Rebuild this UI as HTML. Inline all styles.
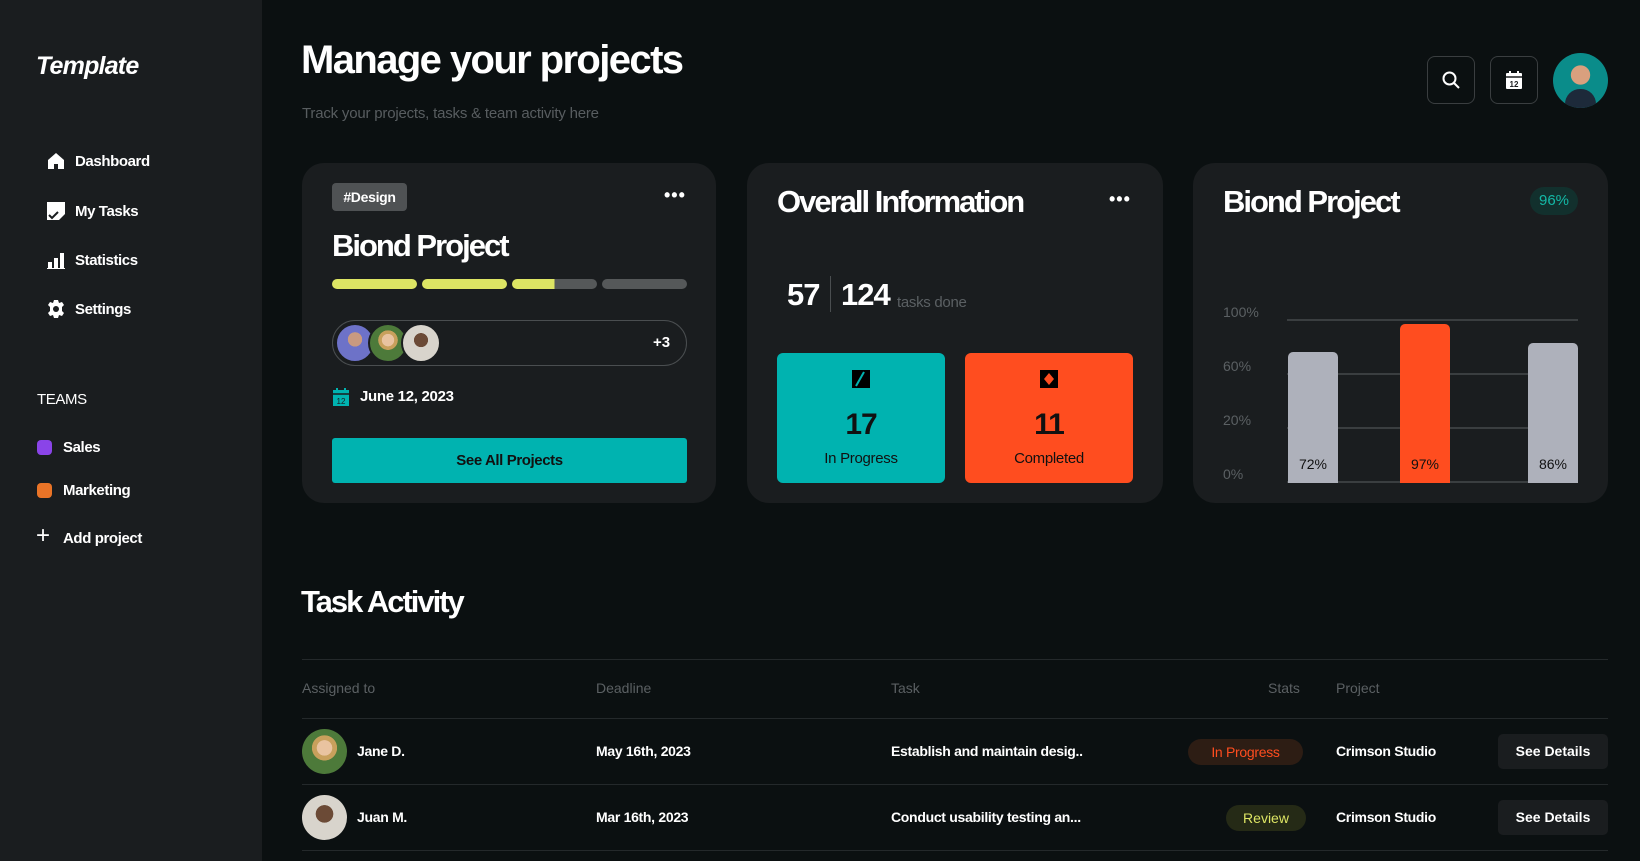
<!DOCTYPE html>
<html><head><meta charset="utf-8"><style>
*{margin:0;padding:0;box-sizing:border-box}
body{width:1640px;height:861px;background:#0b1011;font-family:"Liberation Sans",sans-serif;color:#fff;position:relative;overflow:hidden}
.a{position:absolute}
.side{left:0;top:0;width:262px;height:861px;background:#1a1d1f}
.nav{font-size:15px;font-weight:bold;letter-spacing:-0.4px}
.card{background:#1a1d1f;border-radius:22px;top:163px;height:340px}
.dots{font-size:18px;font-weight:bold;letter-spacing:1px}
.bar{height:10px;border-radius:5px;top:279px;background:#555859}
.av{border-radius:50%;border:2px solid #1a1d1f}
.lbl{color:#5b6063;font-size:14px}
.gl{height:2px;background:#3a3e40;left:1287px;width:291px}
.b{width:50px;border-radius:5px 5px 0 0;font-size:14px;color:#111;text-align:center}
.hl{left:302px;width:1306px;height:1px;background:#24292b}
.th{top:680px;color:#5b6063;font-size:14px}
.td{font-size:14px;font-weight:bold;letter-spacing:-0.3px}
.btn{background:#1a1d1f;border-radius:5px;width:110px;height:35px;left:1498px;font-size:14px;font-weight:bold;text-align:center;line-height:35px}
.h{font-size:31px;font-weight:bold;letter-spacing:-2px}
</style></head><body>
<div class="a side"></div>
<div class="a" style="left:36px;top:52px;font-size:25px;font-weight:bold;font-style:italic;letter-spacing:-0.8px">Template</div>
<svg class="a" style="left:47px;top:152px" width="18" height="18" viewBox="0 0 18 18"><path d="M9 1L1 8v9h6v-5h4v5h6V8z" fill="#fff"/></svg>
<div class="a nav" style="left:75px;top:153px">Dashboard</div>
<svg class="a" style="left:47px;top:202px" width="18" height="18" viewBox="0 0 18 18"><path d="M0 0h18v12l-6 6H0z" fill="#fff"/><path d="M2 13l3 3 6-6" stroke="#1a1d1f" stroke-width="2" fill="none"/></svg>
<div class="a nav" style="left:75px;top:203px">My Tasks</div>
<svg class="a" style="left:47px;top:251px" width="18" height="18" viewBox="0 0 18 18"><path d="M0 17h18v1H0zM1 11h4v6H1zM7 7h4v10H7zM13 2h4v15h-4z" fill="#fff"/></svg>
<div class="a nav" style="left:75px;top:252px">Statistics</div>
<svg class="a" style="left:47px;top:300px" width="18" height="18" viewBox="0 0 18 18"><path d="M7 0h4l1 3 3-1 2 3-2 2v4l2 2-2 3-3-1-1 3H7l-1-3-3 1-2-3 2-2V7L1 5l2-3 3 1z" fill="#fff"/><circle cx="9" cy="9" r="3" fill="#1a1d1f"/></svg>
<div class="a nav" style="left:75px;top:301px">Settings</div>
<div class="a nav" style="left:37px;top:391px;font-weight:normal">TEAMS</div>
<div class="a" style="left:37px;top:440px;width:15px;height:15px;border-radius:4px;background:#8a44e8"></div>
<div class="a nav" style="left:63px;top:439px">Sales</div>
<div class="a" style="left:37px;top:483px;width:15px;height:15px;border-radius:4px;background:#ea7427"></div>
<div class="a nav" style="left:63px;top:482px">Marketing</div>
<div class="a" style="left:36px;top:524px;font-size:24px;font-weight:300;line-height:24px">+</div>
<div class="a nav" style="left:63px;top:530px">Add project</div>

<div class="a" style="left:301px;top:38px;font-size:40px;font-weight:bold;letter-spacing:-1.6px">Manage your projects</div>
<div class="a" style="left:302px;top:105px;font-size:15px;color:#585d60;letter-spacing:-0.2px">Track your projects, tasks &amp; team activity here</div>

<div class="a" style="left:1427px;top:56px;width:48px;height:48px;border:1px solid #3a3e40;border-radius:8px"></div>
<svg class="a" style="left:1441px;top:70px" width="20" height="20" viewBox="0 0 20 20"><circle cx="8.5" cy="8.5" r="6" stroke="#fff" stroke-width="2" fill="none"/><path d="M13 13l5 5" stroke="#fff" stroke-width="2"/></svg>
<div class="a" style="left:1490px;top:56px;width:48px;height:48px;border:1px solid #3a3e40;border-radius:8px"></div>
<svg class="a" style="left:1505px;top:70px" width="18" height="20" viewBox="0 0 18 20"><rect x="1" y="3" width="16" height="16" rx="1" fill="#fff"/><path d="M5 1v4M13 1v4" stroke="#fff" stroke-width="2"/><path d="M1 7h16" stroke="#1a1d1f" stroke-width="1.5"/><text x="9" y="17" font-size="8" font-weight="bold" text-anchor="middle" fill="#1a1d1f" font-family="Liberation Sans">12</text></svg>
<div class="a" style="left:1553px;top:53px;width:55px;height:55px;border-radius:50%;overflow:hidden;background:radial-gradient(circle at 50% 40%,#d9a07e 0 22%,#0a8c8a 23%)"><div class="a" style="left:12px;top:36px;width:31px;height:20px;border-radius:15px 15px 0 0;background:#1d2a3a"></div></div>

<!-- card1 -->
<div class="a card" style="left:302px;width:414px"></div>
<div class="a" style="left:332px;top:183px;width:75px;height:28px;background:#4f5254;border-radius:4px;font-size:14px;font-weight:bold;text-align:center;line-height:28px;letter-spacing:-0.3px">#Design</div>
<div class="a dots" style="left:664px;top:185px">•••</div>
<div class="a h" style="left:332px;top:228px">Biond Project</div>
<div class="a bar" style="left:332px;width:85px;background:#dde564"></div>
<div class="a bar" style="left:422px;width:85px;background:#dde564"></div>
<div class="a bar" style="left:512px;width:85px;background:linear-gradient(90deg,#dde564 50%,#555859 50%)"></div>
<div class="a bar" style="left:602px;width:85px"></div>
<div class="a" style="left:332px;top:320px;width:355px;height:46px;border:1px solid #4a4e50;border-radius:23px"></div>
<div class="a av" style="left:335px;top:323px;width:40px;height:40px;background:radial-gradient(circle at 50% 40%,#c99a80 0 25%,#6d72c8 26%)"></div>
<div class="a av" style="left:368px;top:323px;width:40px;height:40px;background:radial-gradient(circle at 50% 42%,#e9c3a0 0 22%,#c8a05c 23% 35%,#4d7a3a 36%)"></div>
<div class="a av" style="left:401px;top:323px;width:40px;height:40px;background:radial-gradient(circle at 50% 42%,#6b4a36 0 25%,#d8d4cc 26%)"></div>
<div class="a" style="left:653px;top:334px;font-size:15px;font-weight:bold">+3</div>
<svg class="a" style="left:332px;top:387px" width="18" height="20" viewBox="0 0 18 20"><rect x="1" y="3" width="16" height="16" fill="#00b3b0"/><path d="M5 1v4M13 1v4" stroke="#00b3b0" stroke-width="2"/><path d="M1 7h16" stroke="#1a1d1f" stroke-width="1.5"/><text x="9" y="17" font-size="8" text-anchor="middle" fill="#1a1d1f" font-family="Liberation Sans">12</text></svg>
<div class="a td" style="left:360px;top:388px;font-size:15px">June 12, 2023</div>
<div class="a" style="left:332px;top:438px;width:355px;height:45px;background:#00b3b0;border-radius:3px;color:#111;font-size:15px;text-align:center;line-height:45px;font-weight:bold;letter-spacing:-0.4px">See All Projects</div>

<!-- card2 -->
<div class="a card" style="left:747px;width:416px"></div>
<div class="a h" style="left:777px;top:184px">Overall Information</div>
<div class="a dots" style="left:1109px;top:189px">•••</div>
<div class="a" style="left:787px;top:277px;font-size:31px;font-weight:bold;letter-spacing:-1px">57</div>
<div class="a" style="left:830px;top:276px;width:1px;height:36px;background:#4a4e50"></div>
<div class="a" style="left:841px;top:277px;font-size:31px;font-weight:bold;letter-spacing:-1px">124</div>
<div class="a" style="left:897px;top:294px;font-size:15px;color:#5b6063;letter-spacing:-0.3px">tasks done</div>
<div class="a" style="left:777px;top:353px;width:168px;height:130px;background:#00b3b0;border-radius:6px;color:#111;text-align:center">
<svg style="position:absolute;left:75px;top:17px" width="18" height="18"><rect width="18" height="18" fill="#000"/><path d="M12 2L4 16" stroke="#00b3b0" stroke-width="2"/></svg>
<div style="position:absolute;left:0;right:0;top:55px;font-size:30px;font-weight:bold;letter-spacing:-1px">17</div>
<div style="position:absolute;left:0;right:0;top:97px;font-size:15px;letter-spacing:-0.3px">In Progress</div></div>
<div class="a" style="left:965px;top:353px;width:168px;height:130px;background:#ff4d1f;border-radius:6px;color:#111;text-align:center">
<svg style="position:absolute;left:75px;top:17px" width="18" height="18"><rect width="18" height="18" fill="#000"/><path d="M9 3L14 9L9 15L4 9z" fill="#ff4d1f"/></svg>
<div style="position:absolute;left:0;right:0;top:55px;font-size:30px;font-weight:bold;letter-spacing:-1px">11</div>
<div style="position:absolute;left:0;right:0;top:97px;font-size:15px;letter-spacing:-0.3px">Completed</div></div>

<!-- card3 -->
<div class="a card" style="left:1193px;width:415px"></div>
<div class="a h" style="left:1223px;top:184px">Biond Project</div>
<div class="a" style="left:1530px;top:187px;width:48px;height:28px;border-radius:14px;background:#12302d;color:#14b8a6;font-size:15px;text-align:center;line-height:28px">96%</div>
<div class="a lbl" style="left:1223px;top:304px">100%</div>
<div class="a lbl" style="left:1223px;top:358px">60%</div>
<div class="a lbl" style="left:1223px;top:412px">20%</div>
<div class="a lbl" style="left:1223px;top:466px">0%</div>
<div class="a gl" style="top:319px"></div>
<div class="a gl" style="top:373px"></div>
<div class="a gl" style="top:427px"></div>
<div class="a gl" style="top:481px"></div>
<div class="a b" style="left:1288px;top:352px;height:131px;background:#aeb1bb;padding-top:104px">72%</div>
<div class="a b" style="left:1400px;top:324px;height:159px;background:#ff4d1f;padding-top:132px">97%</div>
<div class="a b" style="left:1528px;top:343px;height:140px;background:#aeb1bb;padding-top:113px">86%</div>

<!-- table -->
<div class="a h" style="left:301px;top:584px">Task Activity</div>
<div class="a hl" style="top:659px"></div>
<div class="a th" style="left:302px">Assigned to</div>
<div class="a th" style="left:596px">Deadline</div>
<div class="a th" style="left:891px">Task</div>
<div class="a th" style="left:1268px">Stats</div>
<div class="a th" style="left:1336px">Project</div>
<div class="a hl" style="top:718px"></div>
<div class="a" style="left:302px;top:729px;width:45px;height:45px;border-radius:50%;background:radial-gradient(circle at 50% 42%,#e9c3a0 0 22%,#c8a05c 23% 36%,#4d7a3a 37%)"></div>
<div class="a td" style="left:357px;top:743px">Jane D.</div>
<div class="a td" style="left:596px;top:743px">May 16th, 2023</div>
<div class="a td" style="left:891px;top:743px">Establish and maintain desig..</div>
<div class="a" style="left:1188px;top:739px;width:115px;height:26px;border-radius:13px;background:#2d1d14;color:#ff4d1f;font-size:14px;text-align:center;line-height:26px;letter-spacing:-0.3px">In Progress</div>
<div class="a td" style="left:1336px;top:743px">Crimson Studio</div>
<div class="a btn" style="top:734px">See Details</div>
<div class="a hl" style="top:784px"></div>
<div class="a" style="left:302px;top:795px;width:45px;height:45px;border-radius:50%;background:radial-gradient(circle at 50% 42%,#6b4a36 0 25%,#d8d4cc 26%)"></div>
<div class="a td" style="left:357px;top:809px">Juan M.</div>
<div class="a td" style="left:596px;top:809px">Mar 16th, 2023</div>
<div class="a td" style="left:891px;top:809px">Conduct usability testing an...</div>
<div class="a" style="left:1226px;top:805px;width:80px;height:26px;border-radius:13px;background:#252a16;color:#dde564;font-size:14px;text-align:center;line-height:26px">Review</div>
<div class="a td" style="left:1336px;top:809px">Crimson Studio</div>
<div class="a btn" style="top:800px">See Details</div>
<div class="a hl" style="top:850px"></div>
</body></html>
